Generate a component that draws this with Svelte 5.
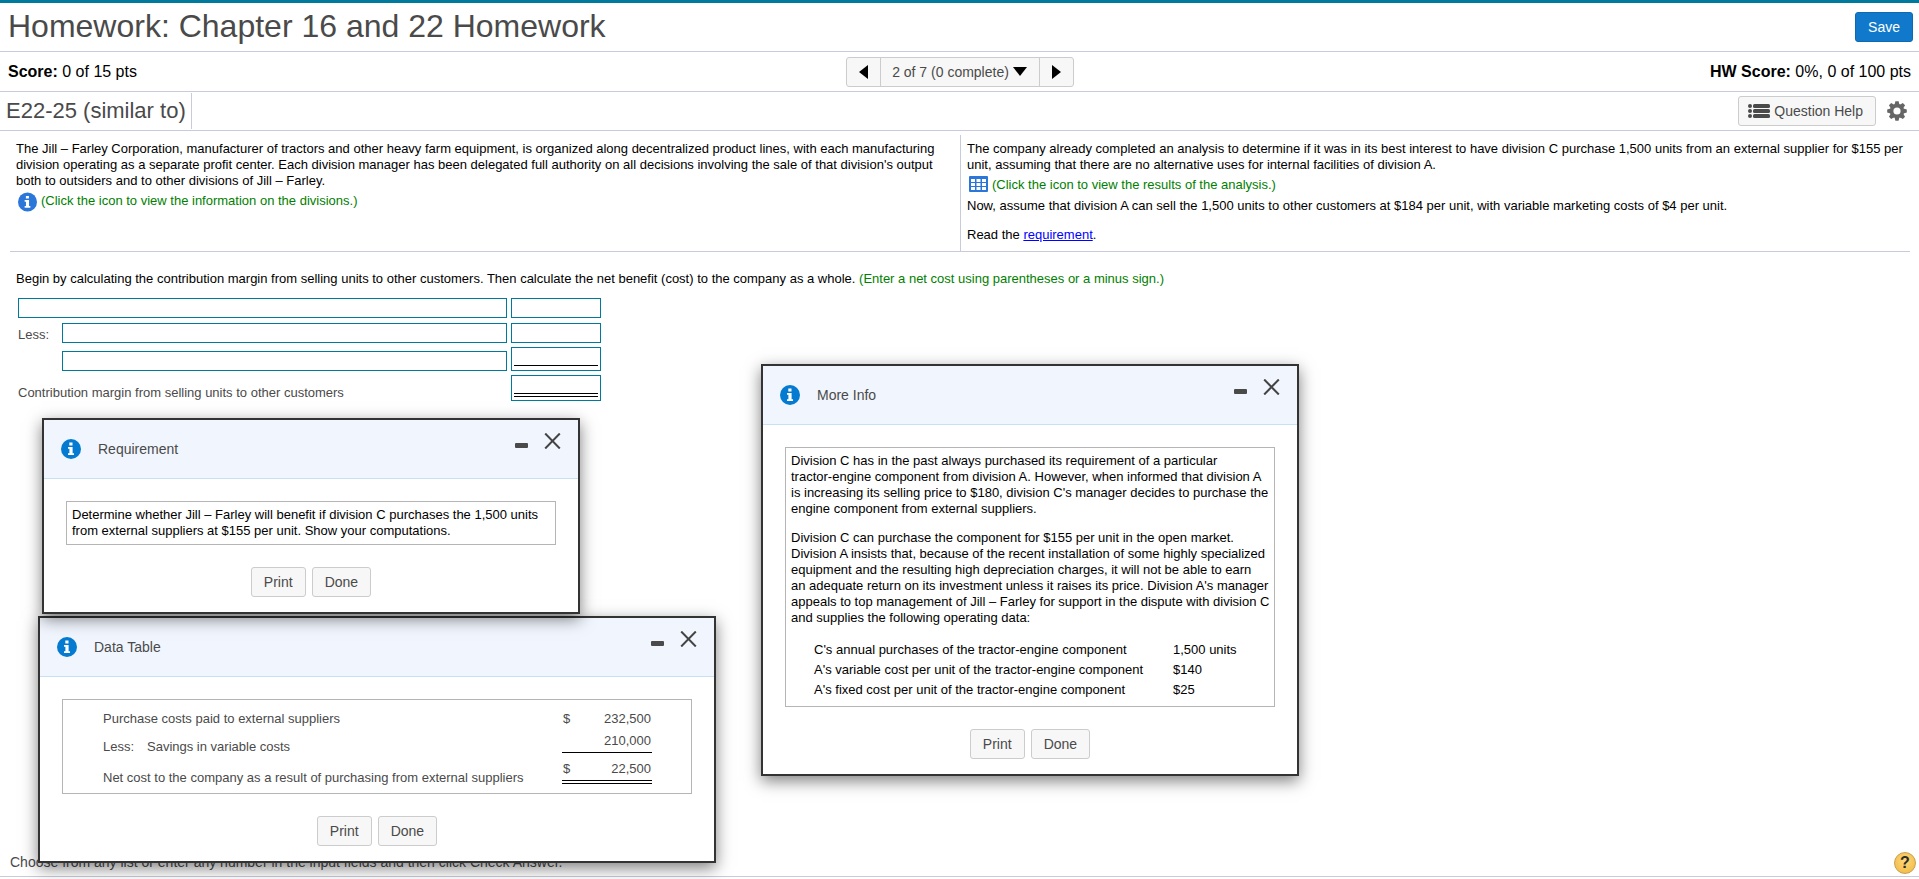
<script>
  const marginRows = [
    { id: "first", prefix: "", total: "" },
    { id: "less-first", prefix: "Less:", total: "" },
    { id: "less-second", prefix: " ", total: "single" },
  ];

  const operatingData = [
    ["C's annual purchases of the tractor-engine component", "1,500 units"],
    ["A's variable cost per unit of the tractor-engine component", "$140"],
    ["A's fixed cost per unit of the tractor-engine component", "$25"],
  ];
</script>

{#snippet infoIcon()}
  <svg class="info-icon" viewBox="0 0 20 20" aria-hidden="true">
    <circle cx="10" cy="10" r="10" fill="currentColor" />
    <path
      fill="#fff"
      d="M8.3 3.6h3.2v2.8H8.3zM7 8h4.6v6.2H13V16H7v-1.8h1.4V9.8H7z"
    />
  </svg>
{/snippet}

{#snippet dialogHeader(title)}
  <header class="dialog-header">
    {@render infoIcon()}
    <h2>{title}</h2>
    <button class="window-button" aria-label="Minimize">
      <svg width="13" height="16" viewBox="0 0 13 16">
        <rect y="10" width="13" height="5" rx="1" fill="#4a4a4a" />
      </svg>
    </button>
    <button class="window-button" aria-label="Close">
      <svg width="17" height="16" viewBox="0 0 17 16">
        <path
          d="M1.2 0.5 15.8 15.5M15.8 0.5 1.2 15.5"
          stroke="#444"
          stroke-width="2"
          fill="none"
        />
      </svg>
    </button>
  </header>
{/snippet}

{#snippet dialogButtons()}
  <div class="dialog-buttons">
    <button class="button">Print</button>
    <button class="button">Done</button>
  </div>
{/snippet}

<div class="page">
  <header class="top-bar">
    <h1>Homework: Chapter 16 and 22 Homework</h1>
    <button class="button save">Save</button>
  </header>

  <div class="score-bar">
    <div><b>Score:</b> 0 of 15 pts</div>
    <nav class="pager">
      <button aria-label="Previous question">
        <svg width="9" height="14" viewBox="0 0 9 14"><path d="M9 0v14L0 7z" /></svg>
      </button>
      <button class="current">
        2 of 7 (0 complete)
        <svg width="14" height="9" viewBox="0 0 14 9"><path d="M0 0h14L7 9z" /></svg>
      </button>
      <button aria-label="Next question">
        <svg width="9" height="14" viewBox="0 0 9 14"><path d="M0 0v14l9-7z" /></svg>
      </button>
    </nav>
    <div class="hw-score"><b>HW Score:</b> 0%, 0 of 100 pts</div>
  </div>

  <div class="question-bar">
    <h2>E22-25 (similar to)</h2>
    <button class="button help">
      <svg width="22" height="14" viewBox="0 0 22 14" fill="#4a4a4a">
        <circle cx="2" cy="2" r="2" />
        <circle cx="2" cy="7" r="2" />
        <circle cx="2" cy="12" r="2" />
        <rect x="5" width="17" height="4" rx="1.5" />
        <rect x="5" y="5" width="17" height="4" rx="1.5" />
        <rect x="5" y="10" width="17" height="4" rx="1.5" />
      </svg>
      Question Help
    </button>
    <button class="gear" aria-label="Settings">
      <svg width="20" height="20" viewBox="-10 -10 20 20" fill="#666">
        {#each [0, 45, 90, 135] as angle}
          <path
            d="M-2.4-6.4-1.6-9.8h3.2l.8 3.4v12.8l-.8 3.4h-3.2l-.8-3.4z"
            transform="rotate({angle})"
          />
        {/each}
        <circle r="7.2" />
        <circle r="3.6" fill="#fff" />
      </svg>
    </button>
  </div>

  <main>
    <section class="problem">
      <div class="problem-left">
        <p>
          The Jill – Farley Corporation, manufacturer of tractors and other heavy farm equipment, is
          organized along decentralized product lines, with each manufacturing division operating as
          a separate profit center. Each division manager has been delegated full authority on all
          decisions involving the sale of that division's output both to outsiders and to other
          divisions of Jill – Farley.
        </p>
        <button class="icon-link">
          {@render infoIcon()}
          <span>(Click the icon to view the information on the divisions.)</span>
        </button>
      </div>
      <div class="problem-right">
        <p>
          The company already completed an analysis to determine if it was in its best interest to
          have division C purchase 1,500 units from an external supplier for $155 per unit, assuming
          that there are no alternative uses for internal facilities of division A.
        </p>
        <button class="icon-link">
          <svg class="table-icon" viewBox="0 0 19 16" aria-hidden="true">
            <rect width="19" height="16" rx="1" fill="#2a76d9" />
            <path
              fill="#fff"
              d="M2 3h4v3H2zM7.500 3h4v3h-4zM13 3h4v3h-4zM2 7h4v3H2zM7.500 7h4v3h-4zM13 7h4v3h-4zM2 11h4v3H2zM7.500 11h4v3h-4zM13 11h4v3h-4z"
            />
          </svg>
          <span>(Click the icon to view the results of the analysis.)</span>
        </button>
        <p>
          Now, assume that division A can sell the 1,500 units to other customers at $184 per unit,
          with variable marketing costs of $4 per unit.
        </p>
        <p class="read">Read the <a href="#requirement">requirement</a>.</p>
      </div>
    </section>

    <section class="work">
      <p>
        Begin by calculating the contribution margin from selling units to other customers. Then
        calculate the net benefit (cost) to the company as a whole.
        <span class="hint">(Enter a net cost using parentheses or a minus sign.)</span>
      </p>
      <div class="answer">
        {#each marginRows as row}
          {#if row.prefix}
            <span class="prefix">{row.prefix}</span>
          {/if}
          <input class="line-item" class:wide={!row.prefix} aria-label="{row.id} item" />
          <span class="amount {row.total}">
            <input aria-label="{row.id} amount" />
          </span>
        {/each}
        <label class="total-label" for="margin">
          Contribution margin from selling units to other customers
        </label>
        <span class="amount double"><input id="margin" /></span>
      </div>
    </section>
  </main>

  <footer>
    <span>
      Choose from any list or enter any number in the input fields and then click Check Answer.
    </span>
    <button class="question-mark" aria-label="Help">?</button>
  </footer>
</div>

<div class="dialog data-table" role="dialog" aria-label="Data Table">
  {@render dialogHeader("Data Table")}
  <div class="dialog-body">
    <table class="costs">
      <tbody>
        <tr>
          <td>Purchase costs paid to external suppliers</td>
          <td><div class="money"><span>$</span><span>232,500</span></div></td>
        </tr>
        <tr>
          <td><span class="less">Less:</span>Savings in variable costs</td>
          <td><div class="money single"><span></span><span>210,000</span></div></td>
        </tr>
        <tr>
          <td>Net cost to the company as a result of purchasing from external suppliers</td>
          <td><div class="money double"><span>$</span><span>22,500</span></div></td>
        </tr>
      </tbody>
    </table>
  </div>
  {@render dialogButtons()}
</div>

<div class="dialog requirement" id="requirement" role="dialog" aria-label="Requirement">
  {@render dialogHeader("Requirement")}
  <div class="dialog-body">
    <p>
      Determine whether Jill – Farley will benefit if division C purchases the 1,500 units from
      external suppliers at $155 per unit. Show your computations.
    </p>
  </div>
  {@render dialogButtons()}
</div>

<div class="dialog more-info" role="dialog" aria-label="More Info">
  {@render dialogHeader("More Info")}
  <div class="dialog-body">
    <p>
      Division C has in the past always purchased its requirement of a particular<br />
      tractor-engine component from division A. However, when informed that division A is increasing
      its selling price to $180, division C's manager decides to purchase the engine component from
      external suppliers.
    </p>
    <p>
      Division C can purchase the component for $155 per unit in the open market. Division A insists
      that, because of the recent installation of some highly specialized equipment and the
      resulting high depreciation charges, it will not be able to earn an&nbsp;adequate return on
      its investment unless it raises its price. Division A's manager appeals to top management of
      Jill – Farley for support in the dispute with division C and supplies the following operating
      data:
    </p>
    <table class="operating">
      <tbody>
        {#each operatingData as [label, value]}
          <tr>
            <td>{label}</td>
            <td>{value}</td>
          </tr>
        {/each}
      </tbody>
    </table>
  </div>
  {@render dialogButtons()}
</div>

<style>
  :global(body) {
    margin: 0;
    background: #fff;
  }

  .page,
  .dialog {
    font-family: "Liberation Sans", Arial, sans-serif;
    font-size: 13px;
    line-height: 16px;
    color: #000;
  }

  .page {
    display: flex;
    flex-direction: column;
    min-height: 100vh;
    box-sizing: border-box;
    border-top: 3px solid #007a9c;
    padding-bottom: 2px;
  }

  h1,
  h2,
  p {
    margin: 0;
    font-weight: normal;
  }

  button,
  input {
    font-family: inherit;
    margin: 0;
    box-sizing: border-box;
  }

  .button {
    height: 30px;
    padding: 0 12px;
    border: 1px solid #ccc;
    border-radius: 3px;
    background: #f7f7f7;
    color: #4a4a4a;
    font-size: 14px;
  }

  .top-bar {
    display: flex;
    justify-content: space-between;
    align-items: center;
    height: 48px;
    padding: 0 6px 0 8px;
    border-bottom: 1px solid #c7cbda;
  }

  h1 {
    font-size: 32px;
    line-height: 40px;
    padding-bottom: 2px;
    color: #4a4a4a;
  }

  .save {
    background: #1179cb;
    border-color: #0d69b2;
    color: #fff;
  }

  .score-bar {
    display: grid;
    grid-template-columns: 1fr auto 1fr;
    align-items: center;
    height: 39px;
    padding: 0 8px;
    border-bottom: 1px solid #c7cbda;
    font-size: 16px;
  }

  .hw-score {
    text-align: right;
  }

  .pager {
    display: flex;
    height: 30px;
    box-sizing: border-box;
    border: 1px solid #ccc;
    border-radius: 3px;
    background: #f7f7f7;
  }

  .pager button {
    display: flex;
    align-items: center;
    justify-content: center;
    gap: 4px;
    width: 33px;
    padding: 0;
    border: 0;
    background: none;
    color: #4a4a4a;
    font-size: 14px;
  }

  .pager .current {
    width: 160px;
    border: solid #ccc;
    border-width: 0 1px;
  }

  .question-bar {
    display: flex;
    align-items: center;
    height: 38px;
    padding-right: 12px;
    border-bottom: 1px solid #c7cbda;
  }

  .question-bar h2 {
    margin-right: auto;
    padding: 0 5px 1px 6px;
    border-right: 1px solid #c7cbda;
    font-size: 22px;
    line-height: 35px;
    color: #4a4a4a;
  }

  .help {
    display: flex;
    align-items: center;
    gap: 4px;
    padding: 0 12px 0 9px;
  }

  .gear {
    display: flex;
    padding: 0;
    margin-left: 11px;
    border: 0;
    background: none;
  }

  main {
    flex: 1;
    padding: 4px 9px 0 10px;
  }

  .problem {
    display: grid;
    grid-template-columns: 1fr 1fr;
    border-bottom: 1px solid #c7cbda;
  }

  .problem-left,
  .problem-right {
    padding: 6px 6px 8px;
  }

  .problem-right {
    border-left: 1px solid #c7cbda;
  }

  .icon-link {
    display: flex;
    gap: 4px;
    padding: 3px 2px 5px;
    border: 0;
    background: none;
    color: green;
    font-size: 13px;
    line-height: 17px;
    text-align: left;
  }

  .info-icon {
    flex: none;
    width: 20px;
    height: 20px;
    color: #2a76d9;
  }

  .icon-link .info-icon {
    width: 19px;
  }

  .table-icon {
    width: 19px;
    height: 16px;
  }

  .read {
    padding-top: 13px;
  }

  a {
    color: #00f;
  }

  .work {
    padding: 19px 6px 0;
  }

  .hint {
    color: green;
  }

  .answer {
    display: grid;
    grid-template-columns: 40px 445px 90px;
    grid-template-rows: 21px 20px 24px 26px;
    gap: 4px;
    padding: 11px 2px 0;
    color: #4a4a4a;
  }

  .answer input {
    width: 100%;
    padding: 0 2px;
    border: 0;
    outline: 0;
    background: none;
    font-size: 13px;
  }

  .answer .line-item {
    align-self: end;
    height: 20px;
    border: 1px solid #007a9c;
  }

  .answer .wide {
    grid-column: span 2;
    align-self: start;
  }

  .amount {
    box-sizing: border-box;
    height: 20px;
    padding: 0 2px;
    border: 1px solid #007a9c;
  }

  .amount input {
    display: block;
    height: 18px;
  }

  .amount.single {
    height: 24px;
  }

  .amount.double {
    height: 26px;
  }

  .amount.single input {
    border-bottom: 1px solid #000;
  }

  .amount.double input {
    height: 21px;
    border-bottom: 4px double #000;
  }

  .prefix {
    padding-top: 4px;
  }

  .total-label {
    grid-column: span 2;
    align-self: end;
  }

  footer {
    display: flex;
    justify-content: space-between;
    align-items: center;
    padding: 0 3px 2px 10px;
    border-bottom: 1px solid #c7cbda;
    color: #4a4a4a;
    font-size: 14px;
  }

  footer span {
    padding-bottom: 2px;
  }

  .question-mark {
    width: 22px;
    height: 22px;
    padding: 0;
    border: 1px solid #c9a050;
    border-radius: 50%;
    background: radial-gradient(circle at 50% 40%, #ffd977, #f0b541);
    color: #2d2d2d;
    font-size: 16px;
    font-weight: bold;
    line-height: 20px;
  }

  .dialog {
    position: absolute;
    box-sizing: border-box;
    width: 538px;
    border: 2px solid #333;
    background: #fff;
    box-shadow: 0 5px 15px rgba(0, 0, 0, 0.5);
  }

  .requirement {
    left: 42px;
    top: 418px;
  }

  .more-info {
    left: 761px;
    top: 364px;
  }

  .data-table {
    left: 38px;
    top: 616px;
    width: 678px;
    color: #4a4a4a;
  }

  .dialog-header {
    display: flex;
    align-items: center;
    height: 58px;
    padding: 0 17px;
    border-bottom: 1px solid #c8e0f4;
    background: #f1f6fe;
  }

  .dialog-header .info-icon {
    color: #047bd1;
  }

  .dialog-header h2 {
    flex: 1;
    padding-left: 17px;
    font-size: 14px;
    color: #4a4a4a;
  }

  .window-button {
    display: flex;
    align-self: flex-start;
    padding: 13px 0 0;
    margin-left: 16px;
    border: 0;
    background: none;
  }

  .dialog-body {
    margin: 22px;
    border: 1px solid #b5b5b5;
  }

  .dialog-body p {
    padding: 5px 2px 5px 5px;
  }

  .dialog-body p + p {
    padding-top: 8px;
  }

  .dialog-buttons {
    display: flex;
    justify-content: center;
    gap: 6px;
    padding-bottom: 15px;
  }

  table {
    border-collapse: collapse;
  }

  td {
    padding: 0;
  }

  .operating {
    margin: 9px 0 6px 28px;
  }

  .operating td {
    height: 20px;
  }

  .operating td:first-child {
    width: 359px;
  }

  .costs {
    margin: 11px 0 6px 40px;
  }

  .costs td {
    vertical-align: bottom;
    padding-bottom: 3px;
  }

  .costs td:first-child {
    width: 459px;
  }

  .costs tr + tr td:first-child {
    padding-bottom: 1px;
  }

  .less {
    display: inline-block;
    width: 44px;
  }

  .money {
    display: flex;
    justify-content: space-between;
    width: 88px;
    padding: 0 1px;
  }

  .money.single {
    padding: 3px 1px;
    border-bottom: 1px solid #000;
  }

  .money.double {
    padding: 5px 1px 3px;
    border-bottom: 4px double #000;
  }
</style>
